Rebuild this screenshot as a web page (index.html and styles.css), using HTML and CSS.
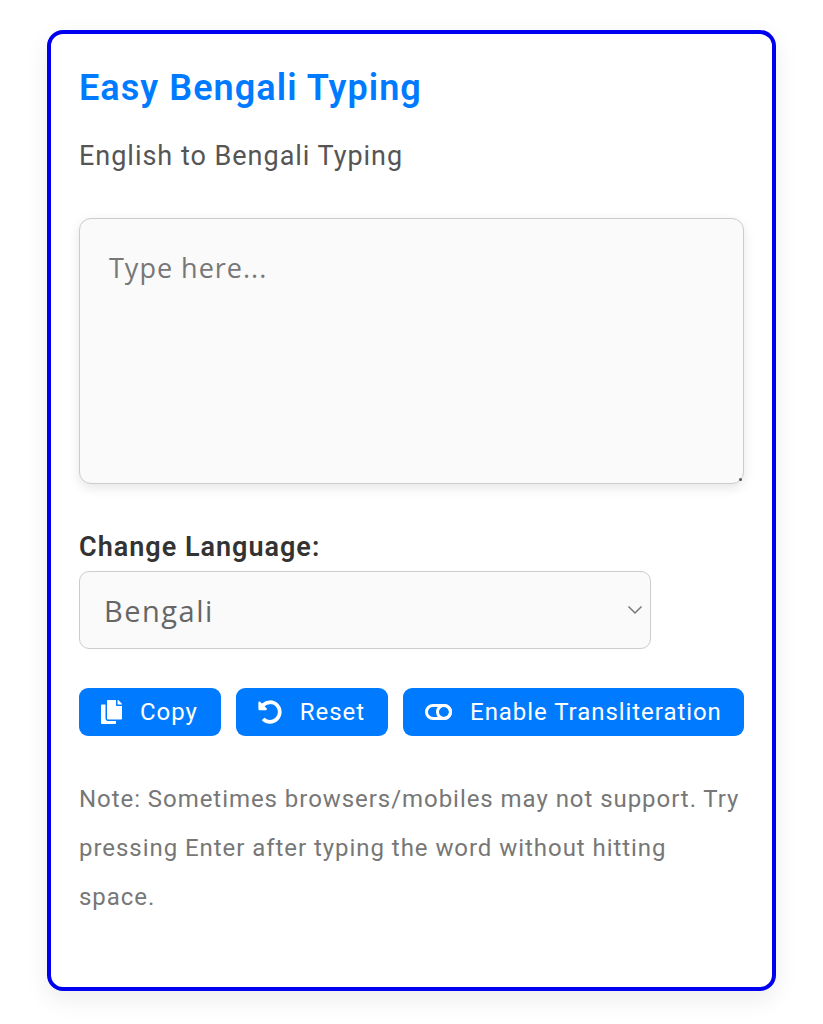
FILE: index.html
```html
<!DOCTYPE html>
<html lang="en">
<head>
<meta charset="utf-8">
<title>Easy Bengali Typing</title>
<link rel="stylesheet" href="styles.css">
</head>
<body>
<main class="card">
  <h1 class="title">Easy Bengali Typing</h1>
  <p class="subtitle">English to Bengali Typing</p>
  <div class="input-wrap">
    <textarea class="input" placeholder="Type here..."></textarea>
    <span class="grip"></span>
  </div>
  <label class="label" for="lang">Change Language:</label>
  <div class="select-wrap">
    <select class="select" id="lang"><option>Bengali</option></select>
    <svg class="chevron" viewBox="0 0 16 10" aria-hidden="true"><path d="M1.500 1.500 8 8l6.500-6.500" fill="none" stroke="#777" stroke-width="1.500"/></svg>
  </div>
  <div class="actions">
    <button class="btn" type="button">
      <svg class="icon icon-copy" viewBox="0 0 448 512" aria-hidden="true"><path fill="#fff" d="M320 448v40c0 13.255-10.745 24-24 24H24c-13.255 0-24-10.745-24-24V120c0-13.255 10.745-24 24-24h72v296c0 30.879 25.121 56 56 56h168zm0-344V0H152c-13.255 0-24 10.745-24 24v368c0 13.255 10.745 24 24 24h272c13.255 0 24-10.745 24-24V128H344c-13.200 0-24-10.800-24-24zm120.971-31.029L375.029 7.029A24 24 0 0 0 358.059 0H352v96h96v-6.059a24 24 0 0 0-7.029-16.970z"/></svg>
      Copy
    </button>
    <button class="btn" type="button">
      <svg class="icon" viewBox="0 0 512 512" aria-hidden="true"><path fill="#fff" d="M255.545 8c-66.269.119-126.438 26.233-170.860 68.685L48.971 40.971C33.851 25.851 8 36.559 8 57.941V192c0 13.255 10.745 24 24 24h134.059c21.382 0 32.090-25.851 16.971-40.971l-41.750-41.750c30.864-28.899 70.801-44.907 113.220-45.273 92.370-.798 170.230 73.950 169.432 169.265C423.176 348.697 349.150 424 256 424c-40.838 0-79.437-14.575-109.812-41.265-4.743-4.168-11.906-3.914-16.370.547L90.150 422.950c-4.873 4.873-4.631 12.825.483 17.439C134.547 480.126 192.710 504 256 504c136.967 0 247.999-111.033 248-247.998C504.001 119.200 392.564 7.755 255.545 8z"/></svg>
      Reset
    </button>
    <button class="btn btn-wide" type="button">
      <svg class="icon icon-toggle" viewBox="0 0 27 24" aria-hidden="true"><rect x="1.500" y="5.500" width="24" height="13" rx="6.500" fill="none" stroke="#fff" stroke-width="3"/><circle cx="19" cy="12" r="6.500" fill="none" stroke="#fff" stroke-width="3"/></svg>
      Enable Transliteration
    </button>
  </div>
  <p class="note">Note: Sometimes browsers/mobiles may not support. Try pressing Enter after typing the word without hitting space.</p>
</main>
</body>
</html>
```
FILE: styles.css
```css
* { box-sizing: border-box; }
html, body { margin: 0; background: #fff; }
body { padding: 30px 47px 33px; font-family: Roboto, sans-serif; }
.card {
  width: 729px;
  height: 961px;
  border: 4px solid #0000f0;
  border-radius: 16px;
  padding: 32px 28px 0;
  background: #fff;
  box-shadow: 0 8px 24px rgba(0, 0, 0, .08);
}
.title {
  margin: 0;
  font-size: 36px;
  line-height: 44px;
  font-weight: 600;
  letter-spacing: 1.060px;
  color: #007bff;
}
.subtitle {
  margin: 28px 0 0;
  font-size: 27px;
  line-height: 36px;
  letter-spacing: .98px;
  color: #555;
}
.input-wrap { position: relative; margin-top: 44px; }
.input {
  display: block;
  width: 100%;
  height: 266px;
  padding: 27px 29px;
  border: 1.500px solid #ccc;
  border-radius: 12px;
  background: #fafafa;
  box-shadow: 0 4px 12px rgba(0, 0, 0, .1);
  font-family: "Open Sans", sans-serif;
  font-size: 27px;
  line-height: 44px;
  letter-spacing: 1px;
  outline: none;
  resize: none;
}
.input::placeholder { color: #777; }
.grip {
  position: absolute;
  right: 2px;
  bottom: 3px;
  width: 3px;
  height: 3px;
  border-radius: 50%;
  background: #555;
}
.label {
  display: block;
  margin-top: 45px;
  font-size: 27px;
  line-height: 36px;
  font-weight: 600;
  letter-spacing: 1px;
  color: #333;
}
.select-wrap { position: relative; width: 572px; margin-top: 6px; }
.select {
  display: block;
  width: 100%;
  height: 78px;
  padding: 0 24px;
  border: 1.500px solid #ccc;
  border-radius: 10px;
  background: #fafafa;
  appearance: none;
  font-family: "Open Sans", sans-serif;
  font-size: 29px;
  letter-spacing: 1.500px;
  color: #666;
}
.chevron { position: absolute; right: 8px; top: 34px; width: 16px; height: 10px; }
.actions { display: flex; gap: 15px; margin-top: 39px; }
.btn {
  display: flex;
  align-items: center;
  gap: 18px;
  height: 48px;
  padding: 0 23px 0 22px;
  border: 0;
  border-radius: 9px;
  background: #007bff;
  color: #fff;
  font-family: Roboto, sans-serif;
  font-size: 24px;
  letter-spacing: .95px;
  white-space: nowrap;
}
.btn-wide { padding-right: 22px; }
.icon { width: 24px; height: 24px; flex: none; }
.icon-copy { width: 21px; }
.icon-toggle { width: 27px; }
.note {
  margin: 39px 0 0;
  font-size: 24px;
  line-height: 49px;
  letter-spacing: .95px;
  color: #777;
}
```
